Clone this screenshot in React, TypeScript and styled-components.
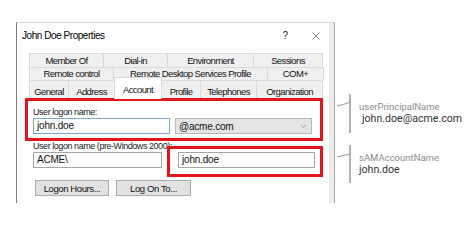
import React from 'react';
import styled, { createGlobalStyle } from 'styled-components';
import { ChevronDown, X } from 'lucide-react';

/**
 * data
 * _______________________________________________________________________________
 */
type Tab = { label: string; w: number; active?: boolean };

const tabRows: { h: number; tabs: Tab[] }[] = [
  {
    h: 14,
    tabs: [
      { label: 'Member Of', w: 75 },
      { label: 'Dial-in', w: 65 },
      { label: 'Environment', w: 87 },
      { label: 'Sessions', w: 70 },
    ],
  },
  {
    h: 13,
    tabs: [
      { label: 'Remote control', w: 85 },
      { label: 'Remote Desktop Services Profile', w: 155 },
      { label: 'COM+', w: 57 },
    ],
  },
  {
    h: 18,
    tabs: [
      { label: 'General', w: 40 },
      { label: 'Address', w: 47 },
      { label: 'Account', w: 48, active: true },
      { label: 'Profile', w: 40 },
      { label: 'Telephones', w: 57 },
      { label: 'Organization', w: 67 },
    ],
  },
];

const App = () => {
  /**
   * template
   * _______________________________________________________________________________
   */
  return (
    <>
      <GlobalStyle />
      <Page>
        <Dialog>
          <TitleBar>
            <Title>John Doe Properties</Title>
            <TitleButtons>
              <Help>?</Help>
              <X size={12} strokeWidth={1.1} color='#222' />
            </TitleButtons>
          </TitleBar>

          <Body>
            <Tabs>
              {tabRows.map((row, i) => (
                <TabRow key={i} h={row.h}>
                  {row.tabs.map((t) => (
                    <TabItem key={t.label} w={t.w} $active={t.active}>
                      {t.label}
                    </TabItem>
                  ))}
                </TabRow>
              ))}
            </Tabs>

            <Highlight>
              <Label>User logon name:</Label>
              <FieldRow>
                <Input w={137} $focused>
                  john.doe
                </Input>
                <Select>
                  <span>@acme.com</span>
                  <ChevronDown size={9} strokeWidth={1.3} color='#555' />
                </Select>
              </FieldRow>
            </Highlight>

            <Section>
              <Label>User logon name (pre-Windows 2000):</Label>
              <FieldRow>
                <Input w={129}>ACME\</Input>
                <Input w={137}>john.doe</Input>
              </FieldRow>
              <Overlay />
              <ButtonRow>
                <Button w={74}>Logon Hours...</Button>
                <Button w={75}>Log On To...</Button>
              </ButtonRow>
            </Section>
          </Body>
        </Dialog>

        <Notes>
          <Note h={39}>
            <svg width='15' height='39' viewBox='0 0 15 39'>
              <line x1='13' y1='0' x2='13' y2='39' stroke='#9a9a9a' strokeWidth='1.5' />
              <line x1='0' y1='12' x2='13' y2='8.5' stroke='#9a9a9a' strokeWidth='1.2' />
            </svg>
            <NoteText>
              <NoteKey>userPrincipalName</NoteKey>
              <NoteValue indent={3}>john.doe@acme.com</NoteValue>
            </NoteText>
          </Note>
          <Note h={38}>
            <svg width='15' height='38' viewBox='0 0 15 38'>
              <line x1='13' y1='0' x2='13' y2='38' stroke='#9a9a9a' strokeWidth='1.5' />
              <line x1='0' y1='12' x2='13' y2='9' stroke='#9a9a9a' strokeWidth='1.2' />
            </svg>
            <NoteText>
              <NoteKey>sAMAccountName</NoteKey>
              <NoteValue indent={0}>john.doe</NoteValue>
            </NoteText>
          </Note>
        </Notes>
      </Page>
    </>
  );
};

export default App;

/**
 * styled-component
 * _______________________________________________________________________________
 */

const GlobalStyle = createGlobalStyle`
  html, body {
    margin: 0;
    padding: 0;
    background: #fff;
  }
  body {
    font-family: "Liberation Sans", Arial, sans-serif;
    color: #000;
  }
`;

const Page = styled.main`
  display: flex;
  align-items: flex-start;
  width: 474px;
  height: 248px;
  box-sizing: border-box;
  padding: 22px 0 0 16px;
`;

const Dialog = styled.div`
  width: 319px;
  height: 181px;
  box-sizing: border-box;
  border-left: 1px solid #7d7d7d;
  border-top: 1px solid #d6d6d6;
  border-right: 1px solid #a8a8a8;
  background: #fff;
  box-shadow: inset -5px 0 0 #ececec;
  display: flex;
  flex-direction: column;
`;

const TitleBar = styled.div`
  height: 25px;
  display: flex;
  align-items: center;
  justify-content: space-between;
  padding: 0 12px 0 5px;
  flex-shrink: 0;
`;

const Title = styled.span`
  font-size: 10px;
  letter-spacing: -0.45px;
`;

const TitleButtons = styled.div`
  display: flex;
  align-items: center;
  gap: 22px;
`;

const Help = styled.span`
  font-size: 10px;
  color: #222;
`;

const Body = styled.div`
  padding: 5px 0 0 8px;
  display: flex;
  flex-direction: column;
`;

const Tabs = styled.div`
  margin-left: 5px;
  width: 297px;
  display: flex;
  flex-direction: column;
`;

const TabRow = styled.div<{ h: number }>`
  display: flex;
  height: ${({ h }) => h}px;
`;

const TabItem = styled.div<{ w: number; $active?: boolean }>`
  width: ${({ w }) => w}px;
  flex-shrink: 0;
  box-sizing: border-box;
  display: flex;
  align-items: flex-end;
  justify-content: center;
  padding-bottom: ${({ $active }) => ($active ? 4 : 1)}px;
  font-size: 9.5px;
  letter-spacing: -0.6px;
  white-space: nowrap;
  color: #111;
  background: ${({ $active }) => ($active ? '#fff' : '#f0f0f0')};
  border: 1px solid #dadada;
  border-bottom: none;
  margin-left: -1px;
  ${({ $active }) =>
    $active &&
    `
    margin-top: -3px;
    height: calc(100% + 4px);
    position: relative;
    z-index: 1;
  `}
`;

const Highlight = styled.div`
  width: 298px;
  height: 43px;
  box-sizing: border-box;
  border: 3px solid #e3141d;
  padding: 5px 0 0 5px;
  display: flex;
  flex-direction: column;
`;

const Label = styled.div`
  font-size: 9px;
  line-height: 12px;
  letter-spacing: -0.45px;
  color: #222;
  white-space: nowrap;
`;

const FieldRow = styled.div`
  display: flex;
  gap: 5px;
  justify-content: flex-start;

  & > *:nth-child(2) {
    margin-left: auto;
  }
`;

const Input = styled.div<{ w: number; $focused?: boolean }>`
  width: ${({ w }) => w}px;
  height: 16px;
  box-sizing: border-box;
  border: 1px solid ${({ $focused }) => ($focused ? '#7ea6d8' : '#a6a6a6')};
  background: #fff;
  font-size: 10px;
  line-height: 14px;
  letter-spacing: -0.2px;
  padding-left: 3px;
  color: #111;
`;

const Select = styled.div`
  width: 137px;
  height: 16px;
  box-sizing: border-box;
  border: 1px solid #b8b8b8;
  background: #e5e5e5;
  display: flex;
  align-items: center;
  justify-content: space-between;
  padding: 0 3px 0 3px;
  font-size: 10px;
  letter-spacing: -0.2px;
  color: #111;
  margin-right: 8px;
`;

const Section = styled.div`
  position: relative;
  width: 298px;
  padding-left: 8px;
  box-sizing: border-box;
  margin-top: -1px;

  ${FieldRow} {
    margin-top: 0;
    padding-right: 8px;
  }
`;

const Overlay = styled.div`
  position: absolute;
  left: 142px;
  top: 6px;
  width: 156px;
  height: 31px;
  box-sizing: border-box;
  border: 3px solid #e3141d;
`;

const ButtonRow = styled.div`
  display: flex;
  gap: 7px;
  margin: 12px 0 0 2px;
`;

const Button = styled.div<{ w: number }>`
  width: ${({ w }) => w}px;
  height: 16px;
  box-sizing: border-box;
  border: 1px solid #adadad;
  background: #e1e1e1;
  display: flex;
  align-items: center;
  justify-content: center;
  font-size: 9.5px;
  letter-spacing: -0.4px;
  color: #111;
`;

const Notes = styled.aside`
  margin: 72px 0 0 2px;
  display: flex;
  flex-direction: column;
  gap: 12px;
`;

const Note = styled.div<{ h: number }>`
  display: flex;
  height: ${({ h }) => h}px;

  svg {
    flex-shrink: 0;
  }
`;

const NoteText = styled.div`
  margin-left: 7px;
  padding-top: 7px;
  display: flex;
  flex-direction: column;
  font-family: Roboto, "Liberation Sans", sans-serif;
`;

const NoteKey = styled.span`
  font-size: 9.5px;
  line-height: 12px;
  color: #8c8c8c;
`;

const NoteValue = styled.span<{ indent: number }>`
  font-size: 10.6px;
  line-height: 12px;
  color: #333;
  padding-left: ${({ indent }) => indent}px;
`;
